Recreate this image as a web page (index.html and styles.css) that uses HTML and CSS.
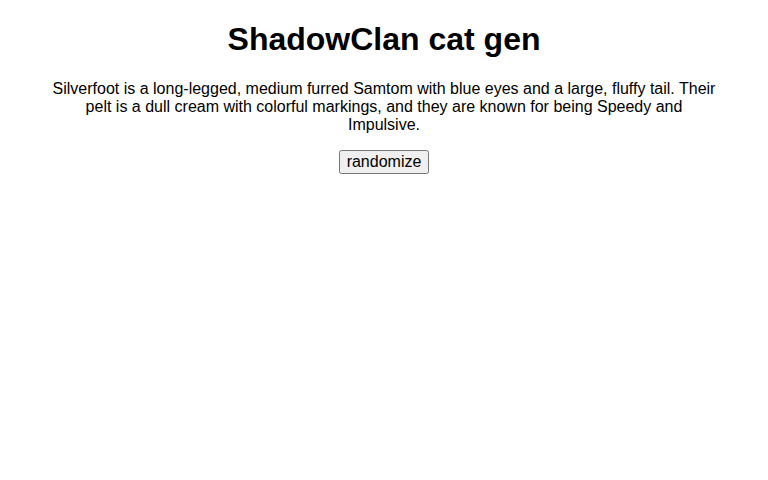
FILE: index.html
```html
<!DOCTYPE html>
<html lang="en">
  <head>
    <meta charset="UTF-8" />
    <meta name="viewport" content="width=device-width, initial-scale=1.0" />
    <title>ShadowClan cat gen</title>
    <link rel="stylesheet" href="styles.css">
  </head>
  <body>
    <div class="gen-container">
      <h1>ShadowClan cat gen</h1>
      <p id="description">
        Silverfoot is a long-legged, medium furred Samtom with blue eyes and a
        large, fluffy tail. Their pelt is a dull cream with colorful markings,
        and they are known for being Speedy and Impulsive.
      </p>
      <button id="randomize">randomize</button>
    </div>
  </body>
</html>
```

FILE: styles.css
```css
body {
  font-family: "Liberation Sans", Arial, sans-serif;
  margin: 0;
}
.gen-container {
  text-align: center;
  padding: 0 48px;
}
h1 {
  font-size: 32px;
}
button {
  font-family: "Liberation Sans", Arial, sans-serif;
  font-size: 16px;
}
```
